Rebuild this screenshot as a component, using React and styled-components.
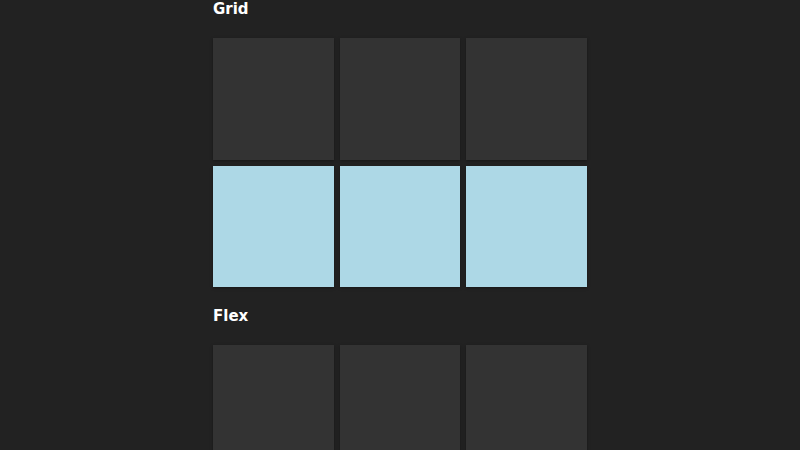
import React from "react";
import styled, { createGlobalStyle } from "styled-components";

const Global = createGlobalStyle`
  html, body { margin: 0; padding: 0; background: #222222; }
  body { font-family: "DejaVu Sans", sans-serif; color: #ffffff; }
`;

const Page = styled.div`
  width: 374px;
  margin: 0 auto;
  display: flex;
  flex-direction: column;
  gap: 20px;
`;

const Heading = styled.h2`
  margin: 0;
  font-size: 15px;
  font-weight: bold;
  line-height: 18px;
  color: #ffffff;
`;

const Grid = styled.div`
  display: grid;
  grid-template-columns: repeat(3, 1fr);
  grid-auto-rows: 121.5px;
  gap: 6px;
`;

const Flex = styled.div`
  display: flex;
  gap: 6px;
`;

const Cell = styled.div`
  flex: 1;
  min-height: 121.5px;
  background: ${(p) => (p.$hl ? "#add8e6" : "#333333")};
  box-shadow: 0 1px 3px rgba(0, 0, 0, 0.35);
`;

export default function App() {
  return (
    <>
      <Global />
      <Page>
        <Heading>Grid</Heading>
        <Grid>
          <Cell />
          <Cell />
          <Cell />
          <Cell $hl />
          <Cell $hl />
          <Cell $hl />
        </Grid>
        <Heading>Flex</Heading>
        <Flex>
          <Cell />
          <Cell />
          <Cell />
        </Flex>
      </Page>
    </>
  );
}
